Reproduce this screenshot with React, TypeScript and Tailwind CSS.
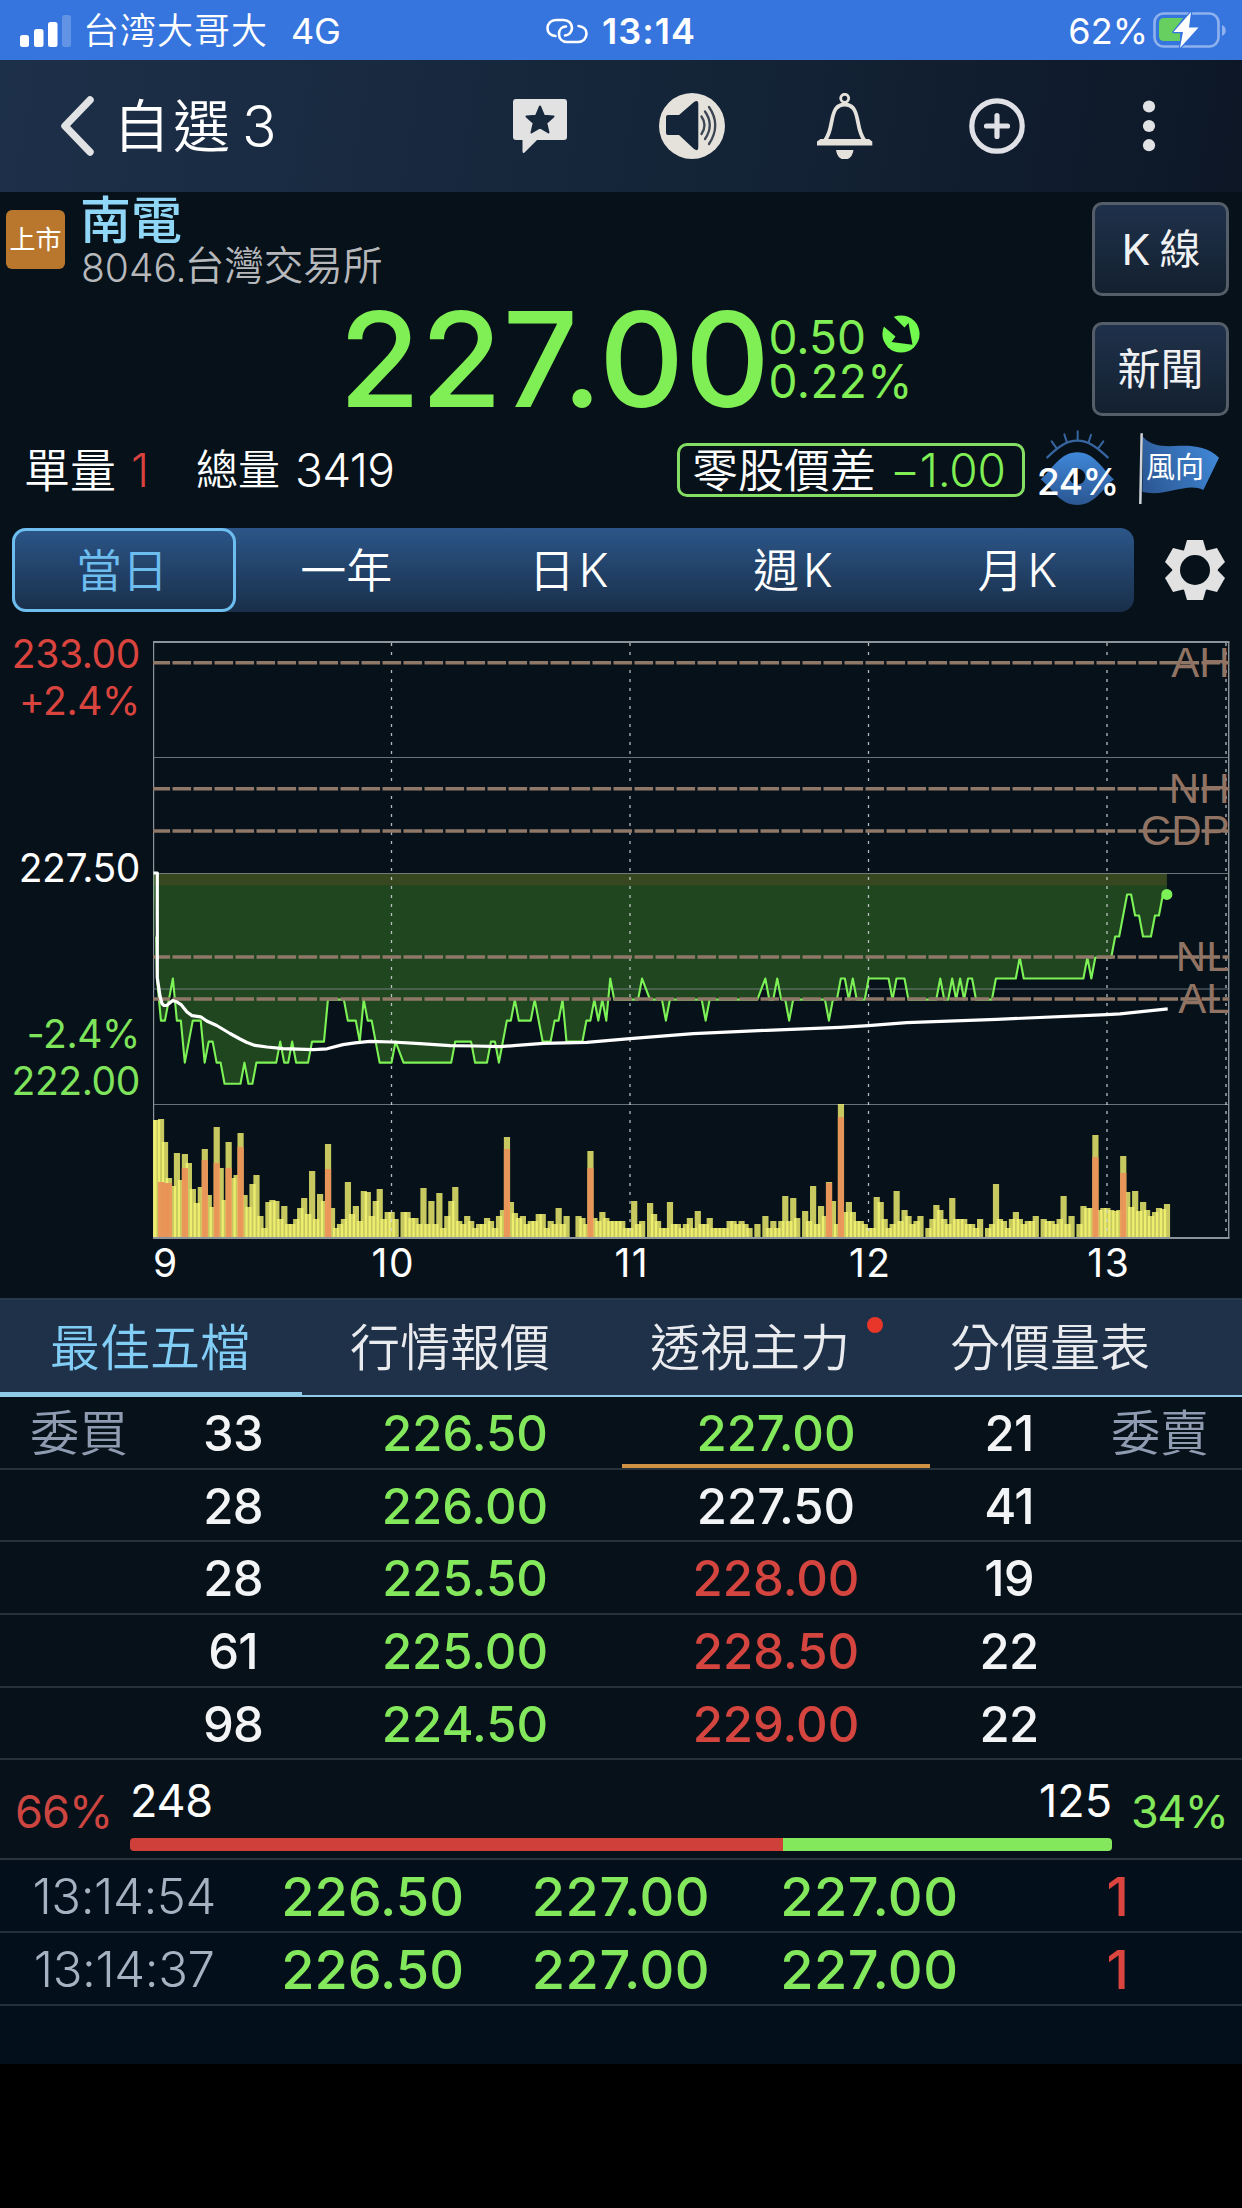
import type { ReactNode } from 'react';

/* ---------- intraday chart data ---------- */

const X0 = 153;
const MINUTE = 3.976;
const BASE = 873.4;
const TICK = 21.03;

const px = (m: number) => X0 + m * MINUTE;
const py = (level: number) => BASE + level * TICK;

// [minutes since 9:00, ticks of 0.5 below the previous close]
const PRICE: number[][] = [
  [0.8, 3], [1, 5], [2, 7], [3, 7], [4, 6], [5, 5], [6, 7], [7, 7], [8, 9], [9, 8], [10, 7], [12, 7], [13, 9], [14, 8], [15, 8],
  [16, 9], [17, 9], [18, 10], [22, 10], [23, 9], [24, 10], [25, 10], [26, 9], [31, 9], [32, 8], [33, 9], [34, 9], [35, 8],
  [36, 9], [39, 9], [40, 8], [43, 8], [44, 6], [48, 6], [49, 7], [51, 7], [52, 8], [53, 6], [54, 7], [55, 7], [56, 8],
  [57, 9], [60, 9], [61, 8], [63, 9], [75, 9], [76, 8], [80, 8], [81, 9], [84, 9], [85, 8], [86, 8], [87, 9], [88, 8],
  [89, 7], [90, 7], [91, 6], [92, 7], [95, 7], [96, 6], [98, 8], [100, 8], [101, 7], [102, 7], [103, 6], [104, 8],
  [108, 8], [109, 7], [110, 7], [111, 6], [112, 7], [113, 6], [114, 7], [115, 5], [116, 6], [122, 6], [123, 5], [125, 6],
  [128, 6], [129, 7], [130, 6], [138, 6], [139, 7], [140, 6], [152, 6], [154, 5], [155, 6], [156, 6], [157, 5], [158, 6],
  [159, 6], [160, 7], [161, 6], [169, 6], [170, 7], [171, 6], [172, 6], [173, 5], [174, 5], [175, 6], [176, 5], [177, 6],
  [179, 6], [180, 5], [185, 5], [186, 6], [187, 5], [189, 5], [190, 6], [197, 6], [198, 5], [199, 6], [200, 6], [201, 5],
  [202, 6], [203, 5], [204, 6], [205, 5], [206, 5], [207, 6], [211, 6], [212, 5], [217, 5], [218, 4], [219, 5], [234, 5],
  [235, 4], [236, 5], [237, 4], [241, 4], [242, 3], [243, 3], [244, 2], [245, 1], [246, 1], [247, 2], [248, 2], [249, 3],
  [251, 3], [252, 2], [253, 2], [254, 1], [255, 1],
];

const AVERAGE =
  '153.5,873 157.3,873 157.3,978 160,996 162,1003.6 164,1005.5 167,1005.3 172.7,1000.6 177,1002 181,1004.6 187,1012 192,1015.6 200.7,1016.8 206.7,1021 216.7,1025.5 230,1033.5 240,1039 247,1042.5 255,1045.4 267,1047 283,1048.6 313,1049.6 327,1048.8 343,1044.6 355,1042.8 370,1041.4 392,1042 420,1043.6 450,1045.7 475,1046 500,1046.7 516.7,1045.3 543.3,1043.3 586.7,1042.3 630,1038.7 693.3,1033.7 766.7,1030.3 840,1027.3 868.3,1025.7 906.7,1022.7 996.7,1019.3 1106.7,1014.7 1120,1013.9 1167.7,1008.8';

const VOLUME = [
  118, 118, 119, 96, 60, 52, 85, 58, 84, 75, 49, 35, 51, 89, 43, 31, 111, 70, 38, 96, 60, 63, 105, 43, 31, 54, 63, 22, 10, 36,
  38, 37, 19, 32, 14, 14, 19, 30, 40, 24, 67, 19, 44, 37, 94, 30, 10, 14, 19, 56, 24, 32, 17, 47, 46, 22, 37, 49, 19, 26,
  26, 19, 0, 26, 26, 20, 20, 14, 50, 14, 37, 14, 45, 10, 22, 37, 51, 17, 14, 22, 17, 10, 14, 14, 20, 17, 10, 22, 28, 101,
  36, 25, 20, 22, 14, 17, 17, 24, 24, 10, 17, 14, 30, 14, 22, 0, 0, 22, 20, 14, 87, 20, 17, 26, 20, 17, 17, 17, 17, 10,
  10, 37, 14, 17, 0, 35, 24, 17, 10, 10, 36, 14, 14, 10, 14, 20, 10, 27, 14, 14, 20, 10, 10, 10, 10, 17, 17, 14, 17, 14,
  10, 0, 14, 0, 22, 10, 17, 10, 17, 42, 17, 40, 20, 0, 27, 17, 52, 14, 32, 22, 56, 37, 14, 134, 26, 36, 26, 17, 17, 14,
  10, 10, 41, 36, 19, 10, 14, 47, 17, 28, 22, 14, 17, 22, 0, 10, 19, 33, 28, 19, 14, 40, 19, 19, 19, 14, 14, 10, 19, 0,
  10, 14, 54, 19, 17, 10, 19, 26, 19, 14, 17, 17, 22, 0, 19, 17, 17, 14, 19, 42, 14, 22, 0, 14, 32, 30, 30, 103, 28, 30,
  30, 28, 27, 28, 82, 46, 31, 47, 27, 36, 28, 22, 26, 30, 29, 34,
];

const BIG_ORDERS: Record<number, number> = {
  2: 56, 3: 55, 4: 55, 8: 70, 13: 78, 16: 75, 19: 70, 22: 91, 44: 69, 89: 89, 110: 70, 170: 55, 173: 121, 237: 81, 244: 65,
};

const CDP = [
  { label: 'AH', y: 662.8 },
  { label: 'NH', y: 788.8 },
  { label: 'CDP', y: 831 },
  { label: 'NL', y: 957 },
  { label: 'AL', y: 999 },
];

function Chart() {
  const line = PRICE.map(([m, l]) => `${px(m)},${py(l)}`).join(' ');
  return (
    <svg width="1089" height="612" viewBox="153 630 1089 612" className="block">
      <polygon points={`${px(0)},${BASE} ${line} ${px(255)},${BASE}`} fill="#20461f" />
      <rect x="153" y={BASE} width={px(255) - 153} height="12" fill="#37471f" />
      <g stroke="#8b949b">
        <path d="M153 642H1229.5" strokeWidth="2" />
        <path d="M153 757.5H1229M153 873.5H1229M153 989H1229M153 1104.5H1229" strokeWidth="1.2" strokeOpacity=".75" />
        <path d="M153.5 642V1238M1228.7 642V1238" strokeWidth="1.4" />
      </g>
      {VOLUME.map((h, m) => (
        <rect key={m} x={m === 0 ? 153 : px(m) - 3} y={1238 - h} width={m === 0 ? 3.5 : 6.2} height={h} fill="#f8f872" fillOpacity=".8" />
      ))}
      {Object.entries(BIG_ORDERS).map(([m, h]) => (
        <rect key={m} x={px(+m) - 3} y={1238 - h} width="6.2" height={h} fill="#ea9259" fillOpacity=".95" />
      ))}
      <path d="M153 1238H1229.5" stroke="#8b949b" strokeWidth="2" />
      <path
        d="M391.5 643V1237M630 643V1237M868.5 643V1237M1107 643V1237M1226 643V1237"
        stroke="#d5d9dc"
        strokeOpacity=".85"
        strokeWidth="1.3"
        strokeDasharray="3 6"
      />
      <path d="M154 873.5V936" stroke="#7df257" strokeWidth="1" strokeOpacity=".4" />
      <polyline points={line} fill="none" stroke="#7df257" strokeWidth="2.1" strokeLinejoin="round" />
      {CDP.map((c) => (
        <g key={c.label}>
          <path d={`M151.5 ${c.y}H1229`} stroke="#8f7868" strokeWidth="3.6" strokeDasharray="18.6 2.4" />
          <text x="1229.5" y={c.y + 14.2} textAnchor="end" fontSize="42" fill="#917363" className="font-['Liberation_Sans',sans-serif]">
            {c.label}
          </text>
        </g>
      ))}
      <polyline points={AVERAGE} fill="none" stroke="#fff" strokeWidth="3.2" strokeLinejoin="round" />
      <circle cx={px(255)} cy={py(1)} r="5.5" fill="#7df257" />
    </svg>
  );
}

/* ---------- icons ---------- */

function SignalIcon() {
  return (
    <svg width="52" height="34" viewBox="0 0 52 34">
      <rect x="0" y="21" width="9" height="12" rx="2.5" fill="#fff" />
      <rect x="14" y="15" width="9.5" height="18" rx="2.5" fill="#fff" />
      <rect x="28" y="8" width="9.5" height="25" rx="2.5" fill="#fff" />
      <rect x="42" y="1" width="9" height="32" rx="2.5" fill="#fff" fillOpacity=".22" />
    </svg>
  );
}

function HotspotIcon() {
  return (
    <svg width="42" height="26" viewBox="0 0 42 26" fill="none" stroke="#fff" strokeWidth="2.6" strokeLinecap="round">
      <path d="M9.5 18C4.5 17.5 1.5 14.5 1.5 10.5C1.5 5.5 5 2 10 2H17.5C22.5 2 26 5.500 26 10C26 14.5 22.5 17.5 19 17.5" />
      <path d="M32.5 8C37.5 8.5 40.5 11.5 40.5 15.5C40.5 20.5 37 24 32 24H21C16 24 13 20.5 13 16C13 11.5 16 8.5 20 8.5" />
    </svg>
  );
}

function BatteryIcon() {
  return (
    <svg width="74" height="38" viewBox="0 0 74 38">
      <rect x="1.5" y="1.5" width="64" height="33" rx="9" fill="none" stroke="#8fb2ee" strokeWidth="2.6" />
      <path d="M69 13c5 2 5 9 0 11z" fill="#8fb2ee" />
      <path d="M11 6H30L20 20H27V29H11Q6 29 6 24V11Q6 6 11 6Z" fill="#66cf5f" />
      <path d="M38 0L20.5 20H30L27 36L45.5 15.5H36Z" fill="#fff" stroke="#3775de" strokeWidth="2.5" paintOrder="stroke" strokeLinejoin="round" />
    </svg>
  );
}

function BackIcon() {
  return (
    <svg width="38" height="62" viewBox="0 0 38 62" fill="none" stroke="#e1e2e4" strokeWidth="7.5" strokeLinecap="round" strokeLinejoin="round">
      <path d="M31 5L6 31L31 57" />
    </svg>
  );
}

function StarNoteIcon() {
  return (
    <svg width="54" height="54" viewBox="0 0 54 54">
      <path d="M3 0H51Q54 0 54 3V38Q54 41 51 41H24L11.5 53.5Q9.5 55 9.5 52V41H3Q0 41 0 38V3Q0 0 3 0Z" fill="#e3e2e3" />
      <path
        d="M27 7.5L30.9 16.7L40.500 17.500L33.3 24L35.5 33.5L27 28.4L18.5 33.5L20.7 24L13.5 17.5L23.1 16.7Z"
        fill="#17283d"
        stroke="#17283d"
        strokeWidth="2"
        strokeLinejoin="round"
      />
    </svg>
  );
}

function SpeakerIcon() {
  return (
    <svg width="66" height="66" viewBox="-33 -33 66 66">
      <circle r="33" fill="#e5e2dc" />
      <path d="M-26 -9Q-26 -11 -24 -11H-13L2 -24Q6.3 -27 6.3 -22V21Q6.3 26 2 23L-13 9H-24Q-26 9 -26 7Z" fill="#14253a" />
      <g fill="none" stroke="#3c4653" strokeWidth="2.3" strokeLinecap="round">
        <path d="M9.5 -9.5Q15.5 -1 9.5 8" />
        <path d="M13 -14.5Q22.5 -1 13 13" />
        <path d="M17 -19Q29.5 -1 17 18" />
      </g>
    </svg>
  );
}

function BellIcon() {
  return (
    <svg width="56" height="66" viewBox="0 0 56 66">
      <g fill="none" stroke="#e5e2dc">
        <circle cx="27.7" cy="5.3" r="4" strokeWidth="2.8" />
        <path d="M8 47.5C16 37 13 24 19 15.5Q22.5 11.5 27.7 11.5Q33 11.5 36.5 15.5C42.5 24 39.5 37 47.5 47.5" strokeWidth="3.8" />
      </g>
      <path d="M3.5 46H52L55.3 48.5V52.5H0V48.5Z" fill="#e5e2dc" />
      <path d="M19 57H36.5Q35 66.5 27.7 66.5Q20.5 66.5 19 57Z" fill="#e5e2dc" />
    </svg>
  );
}

function PlusIcon() {
  return (
    <svg width="58" height="58" viewBox="-29 -29 58 58" fill="none" stroke="#e0e1e6" strokeLinecap="round">
      <circle r="25.2" strokeWidth="5.2" />
      <path d="M-10.5 0H10.5M0 -10.5V10.5" strokeWidth="5.2" />
    </svg>
  );
}

function MoreIcon() {
  return (
    <svg width="14" height="52" viewBox="-7 -26 14 52" fill="#e1e2e4">
      <circle cy="-19.5" r="6.1" />
      <circle r="6.1" />
      <circle cy="19.2" r="6.1" />
    </svg>
  );
}

function DownIcon() {
  return (
    <svg width="38" height="38" viewBox="-19 -19 38 38">
      <circle r="18.6" fill="#72fb4e" />
      <path d="M-9 -19L3.5 -6.5L7.5 -11L11.5 10.8L-9.5 8L-5.5 2.5L-19 -9V-19Z" fill="#061119" />
    </svg>
  );
}

function EyeIcon() {
  return (
    <svg width="80" height="84" viewBox="51 54 240 252">
      <defs>
        <linearGradient id="eye" x1="0" y1="0" x2="0" y2="1">
          <stop offset="0" stopColor="#3f87d9" />
          <stop offset="1" stopColor="#2b5691" />
        </linearGradient>
      </defs>
      <path d="M62 208C100 175 120 127 172 127C224 127 244 175 282 208C244 240 224 285 172 285C120 285 100 240 62 208Z" fill="url(#eye)" />
      <circle cx="172" cy="200" r="24" fill="#07121b" />
      <g fill="none" stroke="#37659f" strokeWidth="7" strokeLinecap="round">
        <path d="M82 142C115 110 140 92 172 92C204 92 229 110 263 142" />
        <path d="M95 94L110 115M133 73L140 95M173 64V90M213 74L206 97M250 94L234 116" strokeWidth="6" />
      </g>
    </svg>
  );
}

function FlagIcon() {
  return (
    <svg width="88" height="84" viewBox="345 54 264 252">
      <defs>
        <linearGradient id="flag" x1="0" y1="0.6" x2="1" y2="0.3">
          <stop offset="0" stopColor="#2d5a97" />
          <stop offset="1" stopColor="#4088d8" />
        </linearGradient>
      </defs>
      <path d="M369 80C390 105 425 110 465 108C515 106 560 108 597 143L550 240C500 215 440 262 367 246Z" fill="url(#flag)" />
      <path d="M365 70L361 282" stroke="#cfd4da" strokeWidth="7.5" />
    </svg>
  );
}

function GearIcon() {
  return (
    <svg width="62" height="62" viewBox="-31 -31 62 62">
      <g fill="#e3e2e2">
        {[0, 60, 120, 180, 240, 300].map((a) => (
          <path key={a} d="M-11.500 -18L-8 -30H8L11.500 -18Z" transform={`rotate(${a})`} />
        ))}
        <circle r="22.5" />
      </g>
      <circle r="15" fill="#061119" />
    </svg>
  );
}

/* ---------- page parts ---------- */

function StatusBar() {
  return (
    <div className="grid h-[60px] grid-cols-3 items-center bg-[#3775de] pt-[2px] text-[36px] text-white">
      <div className="flex items-center pl-[20px]">
        <SignalIcon />
        <span className="ml-[11px] font-[350] tracking-[1px]">台湾大哥大</span>
        <span className="ml-[23px] tracking-[-0.3px]">4G</span>
      </div>
      <div className="flex items-center justify-center">
        <HotspotIcon />
        <span className="ml-[14px] font-semibold tracking-[1px]">13:14</span>
      </div>
      <div className="flex items-center justify-end pr-[15px]">
        <span>62%</span>
        <span className="ml-[5px]">
          <BatteryIcon />
        </span>
      </div>
    </div>
  );
}

function Header() {
  const icons = [<StarNoteIcon />, <SpeakerIcon />, <BellIcon />, <PlusIcon />, <MoreIcon />];
  return (
    <div className="flex h-[132px] items-center bg-[linear-gradient(100deg,#1d3049_0%,#15263a_50%,#0d1726_100%)]">
      <div className="ml-[59px]">
        <BackIcon />
      </div>
      <div className="ml-[16px] flex w-[351px] items-center text-[57px] text-white">
        <span className="font-[350] tracking-[3px]">自選</span>
        <span className="ml-[9px] font-[350]">3</span>
      </div>
      <div className="flex items-center">
        {icons.map((icon, i) => (
          <div key={i} className="flex w-[152.25px] justify-center">
            {icon}
          </div>
        ))}
      </div>
    </div>
  );
}

function SideButton({ children }: { children: ReactNode }) {
  return (
    <div className="flex h-[94px] w-[137px] items-center justify-center rounded-[10px] border-[3px] border-[#555d68] bg-linear-to-b from-[#1f314b] to-[#13202f] text-[43px] text-[#f0f1f3]">
      {children}
    </div>
  );
}

function Quote() {
  return (
    <div className="flex h-[234px] justify-between pr-[13px]">
      <div>
        <div className="flex h-[110px]">
          <div className="mt-[18px] ml-[6px] flex h-[59px] w-[59px] items-center justify-center rounded-[6px] bg-[#b8772d] text-[26px] text-white">
            上市
          </div>
          <div className="ml-[15px] pt-[2px]">
            <div className="flex h-[53px] items-center text-[51px] font-medium text-[#90d6f7]">南電</div>
            <div className="flex h-[40px] items-center text-[39px] text-[#b7b8bc]">
              <span className="ml-[1px] font-[350]">8046.</span>
              <span className="-ml-[2px] text-[39.6px] font-[350]">台灣交易所</span>
            </div>
          </div>
        </div>
        <div className="ml-[339px] flex h-[113px] items-center text-[#80ee55]">
          <span className="text-[132px] font-[480] tracking-[0.5px]">227.00</span>
          <div className="-ml-[2px] text-[46px]">
            <div className="flex h-[44px] items-center">
              0.50
              <span className="-mt-[6px] ml-[16px]">
                <DownIcon />
              </span>
            </div>
            <div className="flex h-[44px] items-center tracking-[0.4px]">0.22%</div>
          </div>
        </div>
      </div>
      <div className="flex flex-col gap-[26px] pt-[10px]">
        <SideButton>
          <span className="pl-[1px]">K</span>
          <span className="ml-[9px] text-[41px]">線</span>
        </SideButton>
        <SideButton>新聞</SideButton>
      </div>
    </div>
  );
}

function Stats() {
  return (
    <div className="flex h-[88px] items-center pr-[19px] pl-[24px] text-[46px] text-white">
      <span className="w-[107px] font-[350]">單量</span>
      <span className="w-[65px] font-[350] text-[#d9413f]">1</span>
      <span className="w-[99px] text-[42px] font-[350]">總量</span>
      <span className="font-[350] tracking-[-0.6px]">3419</span>
      <div className="ml-auto flex h-[54px] w-[348px] items-center rounded-[10px] border-[3px] border-[#84de63] pl-[12px]">
        <span className="font-[350]">零股價差</span>
        <span className="ml-[14px] font-[350] tracking-[-0.2px] text-[#80ee55]">−1.00</span>
      </div>
      <div className="relative ml-[12px] w-[80px]">
        <EyeIcon />
        <span className="absolute top-[35px] left-0 text-[37px] font-[450] tracking-[-0.5px]">24%</span>
      </div>
      <div className="relative ml-[18px] w-[88px]">
        <FlagIcon />
        <span className="absolute top-[25px] left-[11px] text-[29px]">風向</span>
      </div>
    </div>
  );
}

function Periods() {
  const items = ['當日', '一年', '日K', '週K', '月K'];
  return (
    <div className="mt-[14px] flex h-[84px] items-center">
      <div className="ml-[12px] flex h-full w-[1122px] rounded-[14px] bg-linear-to-b from-[#2c5689] to-[#192f4a] text-[46px] font-[350] text-white">
        {items.map((t, i) => (
          <div
            key={t}
            className={
              i === 0
                ? 'flex w-[224px] items-center justify-center rounded-[14px] border-[3px] border-[#6dbdef] pr-[4px] text-[#6dbdef]'
                : 'flex w-[224.4px] items-center justify-center pr-[4px]'
            }
          >
            <span className={i > 1 ? 'tracking-[4px]' : ''}>{t}</span>
          </div>
        ))}
      </div>
      <div className="ml-[30px]">
        <GearIcon />
      </div>
    </div>
  );
}

function ChartPanel() {
  const label = 'flex h-[47px] items-center justify-end';
  return (
    <div className="mt-[18px] h-[668px]">
      <div className="flex">
        <div className="w-[153px] pr-[13px] text-[39px] font-[370] tracking-[-0.4px]">
          <div className={`${label} text-[#d9443f]`}>233.00</div>
          <div className={`${label} text-[#d9443f]`}>+2.4%</div>
          <div className={`${label} mt-[120px] text-white`}>227.50</div>
          <div className={`${label} mt-[119px] text-[#7fe35c]`}>-2.4%</div>
          <div className={`${label} text-[#7fe35c]`}>222.00</div>
        </div>
        <Chart />
      </div>
      <div className="flex h-[40px] items-center pl-[153px] text-[39px] text-white">
        <span className="w-[121px]">9</span>
        {['10', '11', '12', '13'].map((h) => (
          <span key={h} className="w-[238.5px] text-center tracking-[1.5px]">
            {h}
          </span>
        ))}
      </div>
    </div>
  );
}

function DetailTabs() {
  const tabs = ['最佳五檔', '行情報價', '透視主力', '分價量表'];
  return (
    <div className="relative flex h-[99px] border-t-2 border-b-2 border-t-[#263a4c] border-b-[#8fcbe9] bg-[#1e3149] text-[50px] font-[350]">
      {tabs.map((t, i) => (
        <div
          key={t}
          className={
            i === 0
              ? 'relative flex w-[300px] items-center justify-center text-[#82cdf5]'
              : 'relative flex w-[300px] items-center justify-center text-[#e9ebee]'
          }
        >
          {t}
          {i === 2 && <span className="absolute top-[17px] right-[17px] h-[16px] w-[16px] rounded-full bg-[#e9362b]" />}
        </div>
      ))}
      <span className="absolute -bottom-[1px] left-0 h-[4px] w-[302px] bg-[#8fcbe9]" />
    </div>
  );
}

const GREEN = 'text-[#83e85b]';
const RED = 'text-[#d5453f]';
const WHITE = 'text-[#f3f4f5]';

const BOOK = [
  { bq: 33, bid: '226.50', ask: '227.00', tone: GREEN, aq: 21 },
  { bq: 28, bid: '226.00', ask: '227.50', tone: WHITE, aq: 41 },
  { bq: 28, bid: '225.50', ask: '228.00', tone: RED, aq: 19 },
  { bq: 61, bid: '225.00', ask: '228.50', tone: RED, aq: 22 },
  { bq: 98, bid: '224.50', ask: '229.00', tone: RED, aq: 22 },
];

function OrderBook() {
  return (
    <div className="text-[49px] font-[450] text-[#f3f4f5]">
      {BOOK.map((r, i) => (
        <div
          key={i}
          className="grid h-[72.7px] grid-cols-[158px_150px_314px_308px_158px_154px] border-b-2 border-[#27313a] text-center leading-[74px]"
        >
          <span className="font-[350] text-[#8f9bb1]">{i === 0 && '委買'}</span>
          <span className="tracking-[-0.8px]">{r.bq}</span>
          <span className={GREEN}>{r.bid}</span>
          <span className={`h-[71px] ${r.tone} ${i === 0 ? 'shadow-[inset_0_-4px_0_#cf9242]' : ''}`}>{r.ask}</span>
          <span className="tracking-[-0.8px]">{r.aq}</span>
          <span className="pr-[10px] font-[350] text-[#8f9bb1]">{i === 0 && '委賣'}</span>
        </div>
      ))}
    </div>
  );
}

function Totals() {
  return (
    <div className="flex h-[99.5px] border-b-2 border-[#2b3540] text-[45px] font-[370]">
      <span className="w-[130px] pt-[29px] pl-[15px] tracking-[-0.9px] text-[#cd4541]">66%</span>
      <div className="w-[982px] text-white">
        <div className="flex h-[78px] items-center justify-between pt-[3px]">
          <span className="tracking-[-0.3px]">248</span>
          <span>125</span>
        </div>
        <div className="flex h-[13px] overflow-hidden rounded-[4px]">
          <span className="w-[653px] bg-[#d0403b]" />
          <span className="flex-1 bg-[#83e85b]" />
        </div>
      </div>
      <span className="pt-[29px] pl-[19px] tracking-[-1.5px] text-[#83e85b]">34%</span>
    </div>
  );
}

function Trades() {
  return (
    <div className="h-[204px] bg-[#030f1a]">
      {['13:14:54', '13:14:37'].map((t) => (
        <div
          key={t}
          className="grid h-[73px] grid-cols-5 items-center border-b-2 border-[#26303c] pt-[3px] text-center text-[54px] font-[450] text-[#83e85b]"
        >
          <span className="text-[49px] font-[350] tracking-[-0.4px] text-[#a6b1c1]">{t}</span>
          <span>226.50</span>
          <span className="tracking-[0.5px]">227.00</span>
          <span className="tracking-[0.5px]">227.00</span>
          <span className="text-[#dc453f]">1</span>
        </div>
      ))}
    </div>
  );
}

export default function App() {
  return (
    <div className="h-[2208px] w-[1242px] overflow-hidden bg-black font-[Inter,'Noto_Sans_CJK_TC',sans-serif] leading-none whitespace-nowrap">
      <div className="bg-[#061119]">
        <StatusBar />
        <Header />
        <Quote />
        <Stats />
        <Periods />
        <ChartPanel />
        <DetailTabs />
        <OrderBook />
        <Totals />
        <Trades />
      </div>
    </div>
  );
}
